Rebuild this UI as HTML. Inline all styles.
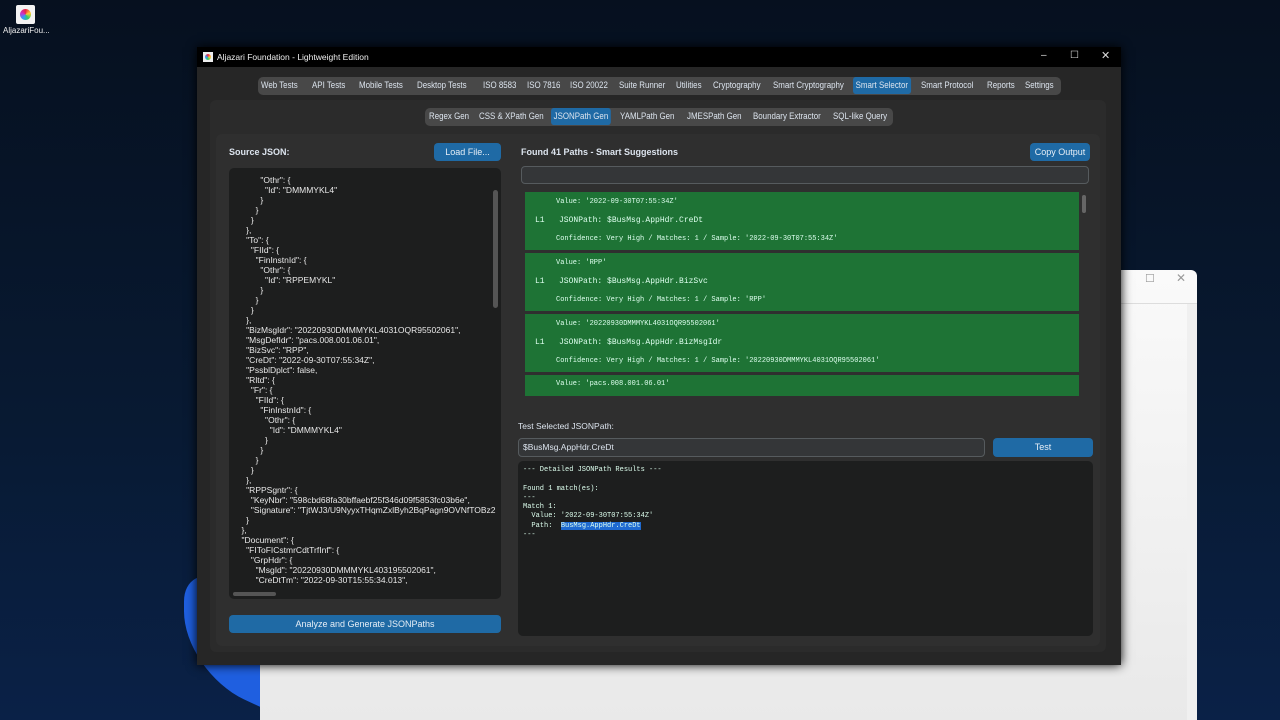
<!DOCTYPE html>
<html><head><meta charset="utf-8"><style>
*{margin:0;padding:0;box-sizing:border-box}
body{width:1280px;height:720px;overflow:hidden;background:linear-gradient(180deg,#06101f,#081a33 60%,#0a2147);position:relative;font-family:"Liberation Sans",sans-serif;color:#dce4ee}
.a{position:absolute}
.t{position:absolute;font-size:9px;color:#dce4ee;white-space:nowrap;line-height:17px;transform:scaleX(0.88);transform-origin:left}
.sel{background:#1f6aa5;border-radius:3px;padding:0 3px}
.j{position:absolute;font-size:8.5px;white-space:pre;color:#e8e8e8;line-height:10px}
.m{font-family:"Liberation Mono",monospace;font-size:7px;color:#dfe;white-space:pre;position:absolute}
.btn{position:absolute;background:#1f6aa5;border-radius:4px;color:#e6eef6;font-size:9px;text-align:center;line-height:18px}
.card{position:absolute;left:525px;width:554px;background:#1e7335}
</style></head><body>
<div class="a" style="left:16px;top:5px;width:19px;height:19px;background:#f3f3f3;border-radius:2px"><div class="a" style="left:4px;top:4px;width:11px;height:11px;border-radius:50%;background:conic-gradient(#e24,#fc3,#3c6,#39f,#c3c,#e24)"></div></div>
<div class="a" style="left:3px;top:26px;font-size:8px;color:#eee">AljazariFou...</div>
<div class="a" style="left:184px;top:580px;width:80px;height:110px;background:#1f5fe0;border-radius:40px 0 0 60px;transform:skewY(25deg)"></div>
<div class="a" style="left:260px;top:270px;width:937px;height:450px;background:linear-gradient(180deg,#fafafa,#e9e9e9);border-radius:6px 6px 0 0"></div>
<div class="a" style="left:1145px;top:272px;font-size:11px;color:#999">☐</div>
<div class="a" style="left:1176px;top:271px;font-size:12px;color:#999">✕</div>
<div class="a" style="left:1121px;top:303px;width:76px;height:1px;background:#ddd"></div>
<div class="a" style="left:1187px;top:304px;width:10px;height:416px;background:#f0f0f0"></div>
<div class="a" style="left:197px;top:47px;width:924px;height:618px;background:#262626;box-shadow:0 0 10px #000"></div>
<div class="a" style="left:197px;top:47px;width:924px;height:20px;background:#000"></div>
<div class="a" style="left:203px;top:52px;width:10px;height:10px;background:#eee"><div class="a" style="left:2px;top:2px;width:6px;height:6px;border-radius:50%;background:conic-gradient(#e24,#fc3,#3c6,#39f,#e24)"></div></div>
<div class="a" style="left:217px;top:52px;font-size:8.5px;color:#eee">Aljazari Foundation - Lightweight Edition</div>
<div class="a" style="left:1041px;top:50px;font-size:10px;color:#ddd">–</div>
<div class="a" style="left:1070px;top:50px;font-size:10px;color:#ddd">☐</div>
<div class="a" style="left:1101px;top:49px;font-size:11px;color:#ddd">✕</div>
<div class="a" style="left:258px;top:77px;width:803px;height:18px;background:#484848;border-radius:5px"></div>
<span class="t" style="left:261px;top:77px">Web Tests</span>
<span class="t" style="left:312px;top:77px">API Tests</span>
<span class="t" style="left:359px;top:77px">Mobile Tests</span>
<span class="t" style="left:417px;top:77px">Desktop Tests</span>
<span class="t" style="left:483px;top:77px">ISO 8583</span>
<span class="t" style="left:527px;top:77px">ISO 7816</span>
<span class="t" style="left:570px;top:77px">ISO 20022</span>
<span class="t" style="left:619px;top:77px">Suite Runner</span>
<span class="t" style="left:676px;top:77px">Utilities</span>
<span class="t" style="left:713px;top:77px">Cryptography</span>
<span class="t" style="left:773px;top:77px">Smart Cryptography</span>
<span class="t sel" style="left:853px;top:77px">Smart Selector</span>
<span class="t" style="left:921px;top:77px">Smart Protocol</span>
<span class="t" style="left:987px;top:77px">Reports</span>
<span class="t" style="left:1025px;top:77px">Settings</span>
<div class="a" style="left:210px;top:100px;width:896px;height:552px;background:#2b2b2b;border-radius:6px"></div>
<div class="a" style="left:425px;top:108px;width:468px;height:18px;background:#484848;border-radius:5px"></div>
<span class="t" style="left:429px;top:108px">Regex Gen</span>
<span class="t" style="left:479px;top:108px">CSS &amp; XPath Gen</span>
<span class="t sel" style="left:551px;top:108px">JSONPath Gen</span>
<span class="t" style="left:620px;top:108px">YAMLPath Gen</span>
<span class="t" style="left:687px;top:108px">JMESPath Gen</span>
<span class="t" style="left:753px;top:108px">Boundary Extractor</span>
<span class="t" style="left:833px;top:108px">SQL-like Query</span>
<div class="a" style="left:216px;top:134px;width:884px;height:512px;background:#2f2f2f;border-radius:6px"></div>
<div class="a" style="left:229px;top:147px;font-size:9px;font-weight:bold">Source JSON:</div>
<div class="btn" style="left:434px;top:143px;width:67px">Load File...</div>
<div class="a" style="left:229px;top:168px;width:272px;height:431px;background:#1d1e1e;border-radius:5px;overflow:hidden">
<div class="a" style="left:264px;top:22px;width:5px;height:118px;background:#555;border-radius:3px"></div>
<div class="a" style="left:4px;top:424px;width:43px;height:4px;background:#555;border-radius:2px"></div>
</div>
<div class="j" style="left:232px;top:175px">            "Othr": {
              "Id": "DMMMYKL4"
            }
          }
        }
      },
      "To": {
        "FIId": {
          "FinInstnId": {
            "Othr": {
              "Id": "RPPEMYKL"
            }
          }
        }
      },
      "BizMsgIdr": "20220930DMMMYKL4031OQR95502061",
      "MsgDefIdr": "pacs.008.001.06.01",
      "BizSvc": "RPP",
      "CreDt": "2022-09-30T07:55:34Z",
      "PssblDplct": false,
      "Rltd": {
        "Fr": {
          "FIId": {
            "FinInstnId": {
              "Othr": {
                "Id": "DMMMYKL4"
              }
            }
          }
        }
      },
      "RPPSgntr": {
        "KeyNbr": "598cbd68fa30bffaebf25f346d09f5853fc03b6e",
        "Signature": "TjtWJ3/U9NyyxTHqmZxlByh2BqPagn9OVNfTOBz2
      }
    },
    "Document": {
      "FIToFICstmrCdtTrfInf": {
        "GrpHdr": {
          "MsgId": "20220930DMMMYKL403195502061",
          "CreDtTm": "2022-09-30T15:55:34.013",</div>
<div class="btn" style="left:229px;top:615px;width:272px">Analyze and Generate JSONPaths</div>
<div class="a" style="left:521px;top:147px;font-size:9px;font-weight:bold">Found 41 Paths - Smart Suggestions</div>
<div class="btn" style="left:1030px;top:143px;width:60px">Copy Output</div>
<div class="a" style="left:521px;top:166px;width:568px;height:18px;background:#343638;border:1px solid #565b5e;border-radius:4px"></div>
<div class="card" style="top:192px;height:58px"></div>
<div class="card" style="top:253px;height:58px"></div>
<div class="card" style="top:314px;height:58px"></div>
<div class="card" style="top:375px;height:21px"></div>
<div class="a" style="left:1082px;top:195px;width:4px;height:18px;background:#666;border-radius:2px"></div>
<div class="m" style="left:556px;top:198px">Value: '2022-09-30T07:55:34Z'</div>
<div class="m" style="left:535px;top:216px;font-size:8px">L1   JSONPath: $BusMsg.AppHdr.CreDt</div>
<div class="m" style="left:556px;top:235px">Confidence: Very High / Matches: 1 / Sample: '2022-09-30T07:55:34Z'</div>
<div class="m" style="left:556px;top:259px">Value: 'RPP'</div>
<div class="m" style="left:535px;top:277px;font-size:8px">L1   JSONPath: $BusMsg.AppHdr.BizSvc</div>
<div class="m" style="left:556px;top:296px">Confidence: Very High / Matches: 1 / Sample: 'RPP'</div>
<div class="m" style="left:556px;top:320px">Value: '20220930DMMMYKL4031OQR95502061'</div>
<div class="m" style="left:535px;top:338px;font-size:8px">L1   JSONPath: $BusMsg.AppHdr.BizMsgIdr</div>
<div class="m" style="left:556px;top:357px">Confidence: Very High / Matches: 1 / Sample: '20220930DMMMYKL4031OQR95502061'</div>
<div class="m" style="left:556px;top:380px">Value: 'pacs.008.001.06.01'</div>
<div class="a" style="left:518px;top:421px;font-size:8.5px">Test Selected JSONPath:</div>
<div class="a" style="left:518px;top:438px;width:467px;height:19px;background:#343638;border:1px solid #565b5e;border-radius:4px;font-size:8.5px;line-height:17px;padding-left:4px">$BusMsg.AppHdr.CreDt</div>
<div class="btn" style="left:993px;top:438px;width:100px;height:19px">Test</div>
<div class="a" style="left:518px;top:461px;width:575px;height:175px;background:#1d1e1e;border-radius:5px"></div>
<div class="m" style="left:523px;top:466px;line-height:9.3px">--- Detailed JSONPath Results ---

Found 1 match(es):
---
Match 1:
  Value: '2022-09-30T07:55:34Z'
  Path:  <span style="background:#1f6ad0">BusMsg.AppHdr.CreDt</span>
---</div>
</body></html>
